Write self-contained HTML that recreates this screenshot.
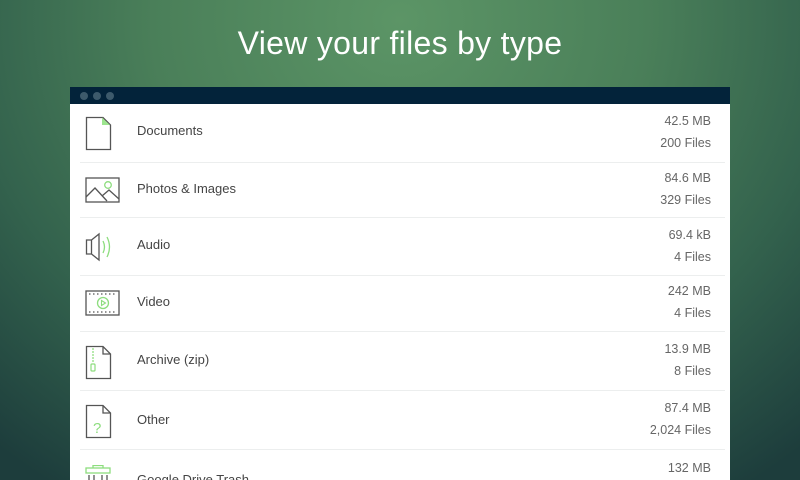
<!DOCTYPE html>
<html style="width:800px;height:480px;overflow:hidden;background:#1d3d3c"><head><style>
body{margin:0;width:800px;height:480px;overflow:hidden;font-family:"Liberation Sans",sans-serif;
background:radial-gradient(ellipse 620px 560px at 400px 20px,#5c9566 0%,#4a7f59 40%,#33624d 70%,#1d3d3c 100%);position:relative}
h1{position:absolute;top:25px;left:0;width:800px;text-align:center;margin:0;font-weight:normal;color:#fff;font-size:32px;letter-spacing:0.3px}
.win{position:absolute;left:70px;top:87px;width:660px;height:393px;background:#fff;overflow:hidden}
.bar{height:17px;background:#03233a;position:relative}
.bar i{position:absolute;top:5px;width:8px;height:8px;border-radius:50%;background:#3d5a6b}
.row{position:absolute;left:10px;width:645px;border-bottom:1px solid #eceeee}
.row .t{position:absolute;left:57px;font-size:13px;color:#444}
.row .r{position:absolute;right:14px;text-align:right;font-size:12.5px;color:#666;line-height:22px}
.row svg{position:absolute;left:5px}
</style></head><body>
<h1>View your files by type</h1>
<div class="win">
<div class="bar"><i style="left:10px"></i><i style="left:23px"></i><i style="left:36px"></i></div>
<div class="row" style="top:17px;height:58px"><svg width="30" height="36" style="top:12px"><path d="M1.5 1.5H18L25.5 9V33.5H1.5Z" fill="none" stroke="#555" stroke-width="1.3"/><path d="M17 1.5V9H25Z" fill="#9de58f"/></svg><span class="t" style="top:19px">Documents</span><div class="r" style="top:6px">42.5 MB<br>200 Files</div></div>
<div class="row" style="top:76px;height:54px"><svg width="40" height="30" style="top:14px"><rect x="1" y="1" width="33" height="24" fill="none" stroke="#555" stroke-width="1.3"/><path d="M1 20L10 11L22 24M17 19L24 13L34 22" fill="none" stroke="#555" stroke-width="1.3"/><circle cx="23" cy="8" r="3.3" fill="none" stroke="#8ddd7e" stroke-width="1.3"/></svg><span class="t" style="top:18px">Photos &amp; Images</span><div class="r" style="top:4px">84.6 MB<br>329 Files</div></div>
<div class="row" style="top:131px;height:57px"><svg width="40" height="32" style="top:14px"><path d="M1.5 8H6.5V22H1.5Z M6.5 8L14 2V28L6.5 22" fill="none" stroke="#555" stroke-width="1.3"/><path d="M18 9Q21 15 18 21M22 5Q27 15 22 25" fill="none" stroke="#8ddd7e" stroke-width="1.3"/></svg><span class="t" style="top:19px">Audio</span><div class="r" style="top:6px">69.4 kB<br>4 Files</div></div>
<div class="row" style="top:189px;height:55px"><svg width="40" height="30" style="top:14px"><rect x="1" y="1" width="33" height="24" fill="none" stroke="#555" stroke-width="1.3"/><path d="M4 4H31M4 22H31" stroke="#555" stroke-width="1.3" stroke-dasharray="1.5 2.5"/><circle cx="18" cy="13" r="5.5" fill="none" stroke="#8ddd7e" stroke-width="1.3"/><path d="M16.5 10.5L20.5 13L16.5 15.5Z" fill="none" stroke="#8ddd7e" stroke-width="1.1"/></svg><span class="t" style="top:18px">Video</span><div class="r" style="top:4px">242 MB<br>4 Files</div></div>
<div class="row" style="top:245px;height:58px"><svg width="30" height="36" style="top:13px"><path d="M1.5 1.5H18L25.5 9V33.5H1.5Z M18 1.5V9H25.5" fill="none" stroke="#555" stroke-width="1.3"/><path d="M7 4H9M7 7H9M7 10H9M7 13H9M7 16H9" stroke="#8ddd7e" stroke-width="1.2"/><rect x="6" y="19" width="4" height="7" rx="1" fill="none" stroke="#8ddd7e" stroke-width="1.2"/></svg><span class="t" style="top:20px">Archive (zip)</span><div class="r" style="top:6px">13.9 MB<br>8 Files</div></div>
<div class="row" style="top:304px;height:58px"><svg width="30" height="36" style="top:13px"><path d="M1.5 1.5H18L25.5 9V33.5H1.5Z M18 1.5V9H25.5" fill="none" stroke="#555" stroke-width="1.3"/><text x="8" y="29" font-size="15" fill="#8ddd7e" font-family="Liberation Sans">?</text></svg><span class="t" style="top:21px">Other</span><div class="r" style="top:6px">87.4 MB<br>2,024 Files</div></div>
<div class="row" style="top:363px;height:58px;border:0"><svg width="30" height="30" style="top:15px"><rect x="1" y="3" width="24" height="5" fill="none" stroke="#8ddd7e" stroke-width="1.3"/><path d="M8 3V0.5H18V3" fill="none" stroke="#8ddd7e" stroke-width="1.3"/><path d="M4 10V20M9 10V20M17 10V20M22 10V20" stroke="#555" stroke-width="1.3"/></svg><span class="t" style="top:22px">Google Drive Trash</span><div class="r" style="top:7px">132 MB</div></div>
</div>
</body></html>
